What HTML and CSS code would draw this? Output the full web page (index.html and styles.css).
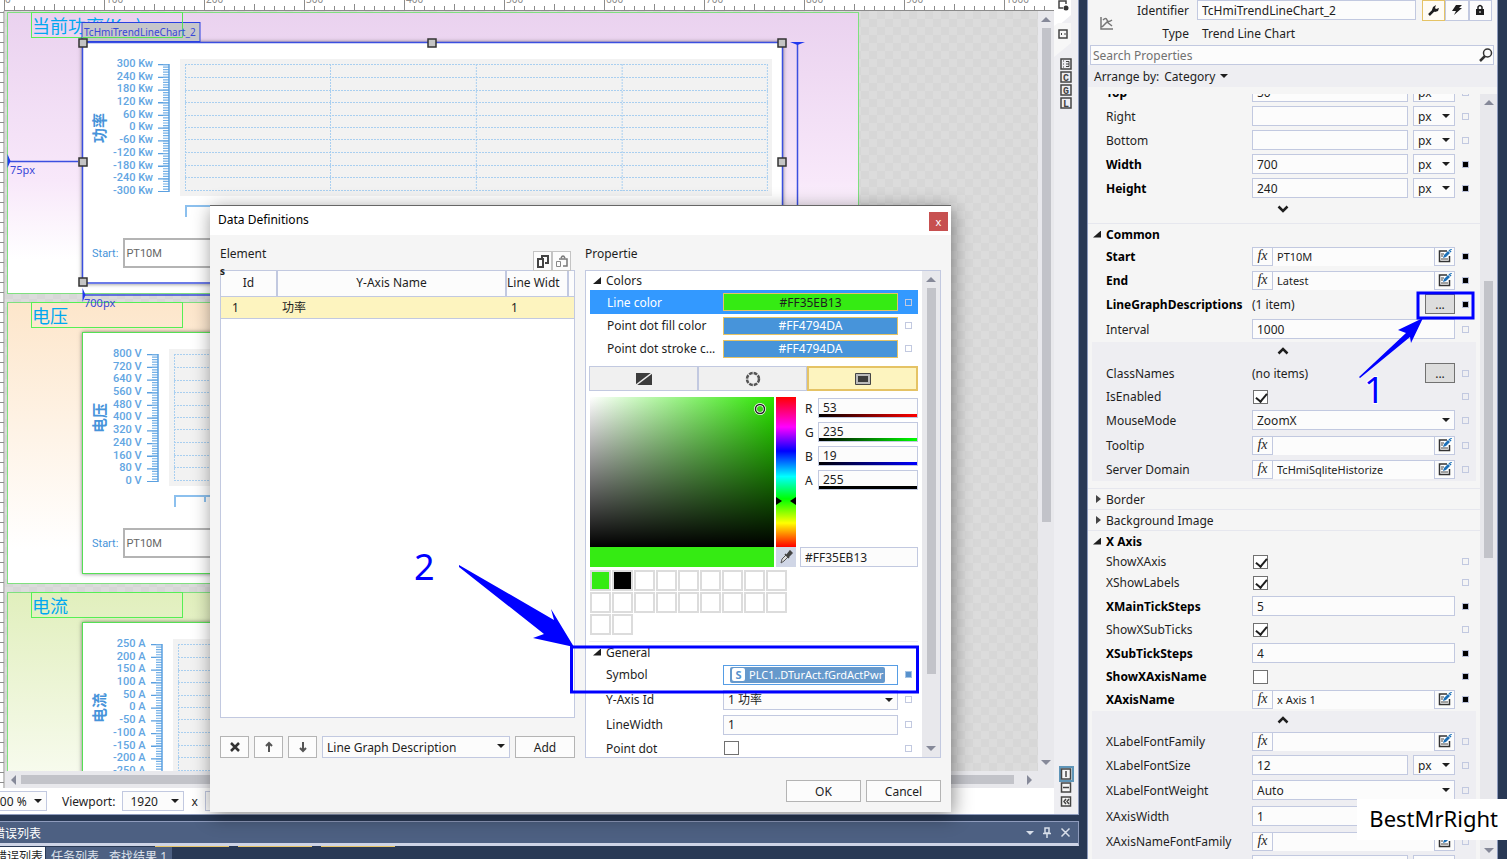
FILE: index.html
```html
<!DOCTYPE html>
<html lang="zh-CN">
<head>
    <meta charset="UTF-8">
    <meta name="viewport" content="width=device-width, initial-scale=1.0">
    <title>TcHmi Designer</title>
    <link rel="stylesheet" href="styles.css">
</head>
<body>
    <svg class="defs" width="0" height="0">
        <symbol id="edit" viewBox="0 0 14 14">
            <path d="M9 2H1.500V12.500H11.500V7" fill="#fff" stroke="#333" stroke-width="1.500"/>
            <path d="M3 5h3M3 7h2M3 10h7" stroke="#444"/>
            <path d="M5 9l1-3 4-4 2 2-4 4z" fill="#1c70b8"/>
            <path d="M11 1l2 2M13 0v1" stroke="#1c70b8" stroke-width="1.500"/>
        </symbol>
        <symbol id="up" viewBox="0 0 12 8"><path d="M1.500 6.500L6 2l4.500 4.500" fill="none" stroke="#1e1e1e" stroke-width="2.500"/></symbol>
        <symbol id="down" viewBox="0 0 12 8"><path d="M1.500 1.500L6 6l4.500-4.500" fill="none" stroke="#1e1e1e" stroke-width="2.500"/></symbol>
        <!-- Escala vertical: 10 divisiones -->
        <symbol id="scale" viewBox="0 0 12 137">
            <path d="M5.500 5V133" stroke="#5ba0e0" stroke-width="11" stroke-dasharray="1.300 11.400"/>
            <path d="M8 5V132" stroke="#74b0e6" stroke-width="6" stroke-dasharray="1.200 1.340"/>
            <path d="M11 5V133" stroke="#5ba0e0" stroke-width="1.500"/>
        </symbol>
        <symbol id="grid">
            <g stroke="#a9cff0" stroke-dasharray="2 1">
                <line x1="5" x2="100%" y1="5.500" y2="5.500"/>
                <line x1="5" x2="100%" y1="18.500" y2="18.500"/>
                <line x1="5" x2="100%" y1="31.500" y2="31.500"/>
                <line x1="5" x2="100%" y1="43.500" y2="43.500"/>
                <line x1="5" x2="100%" y1="56.500" y2="56.500"/>
                <line x1="5" x2="100%" y1="68.500" y2="68.500"/>
                <line x1="5" x2="100%" y1="80.500" y2="80.500"/>
                <line x1="5" x2="100%" y1="93.500" y2="93.500"/>
                <line x1="5" x2="100%" y1="106.500" y2="106.500"/>
                <line x1="5" x2="100%" y1="118.500" y2="118.500"/>
                <line x1="5" x2="100%" y1="131.500" y2="131.500"/>
                <line x1="5.500" x2="5.500" y1="5" y2="132"/>
                <line x1="25.600%" x2="25.600%" y1="5" y2="132"/>
                <line x1="50.400%" x2="50.400%" y1="5" y2="132"/>
                <line x1="75.200%" x2="75.200%" y1="5" y2="132"/>
                <line x1="99.900%" x2="99.900%" y1="5" y2="132"/>
            </g>
        </symbol>
    </svg>

    <main class="workspace">
        <div class="designer">
            <div class="canvas">
                <svg class="ruler-top" height="11">
                    <defs>
                        <pattern id="tick-h" x="4" width="10" height="11" patternUnits="userSpaceOnUse"><path d="M.500 6v5" stroke="#8c8c8c"/></pattern>
                        <pattern id="tick-h50" x="4" width="50" height="11" patternUnits="userSpaceOnUse"><path d="M.500 4v7" stroke="#8c8c8c"/></pattern>
                        <pattern id="tick-h100" x="4" width="100" height="11" patternUnits="userSpaceOnUse"><path d="M.500 0v11" stroke="#8c8c8c"/></pattern>
                        <pattern id="tick-v" y="1" width="5" height="10" patternUnits="userSpaceOnUse"><path d="M0 .500h4" stroke="#8c8c8c"/></pattern>
                    </defs>
                    <rect x="4" width="100%" height="11" fill="url(#tick-h)"/>
                    <rect x="4" width="100%" height="11" fill="url(#tick-h50)"/>
                    <rect x="4" width="100%" height="11" fill="url(#tick-h100)"/>
                    <path d="M4 10.500H1060" stroke="#8c8c8c"/>
                    <g class="ruler-text">
                        <text x="5" y="3">0</text><text x="106" y="3">100</text><text x="206" y="3">200</text>
                        <text x="306" y="3">300</text><text x="406" y="3">400</text><text x="506" y="3">500</text>
                        <text x="606" y="3">600</text><text x="706" y="3">700</text><text x="806" y="3">800</text>
                        <text x="906" y="3">900</text><text x="1006" y="3">1000</text>
                    </g>
                </svg>
                <svg class="ruler-left" width="5">
                    <rect width="5" height="100%" fill="url(#tick-v)"/>
                    <path d="M4 0V900" stroke="#8c8c8c"/>
                </svg>
                <div class="stage">
                    <section class="region region-power">
                        <h2>当前功率(Kw)</h2>
                        <div class="chart">
                            <div class="chart-main">
                                <b class="axis-name">功率</b>
                                <ul class="axis-labels">
                                    <li>300 Kw</li><li>240 Kw</li><li>180 Kw</li><li>120 Kw</li><li>60 Kw</li><li>0 Kw</li>
                                    <li>-60 Kw</li><li>-120 Kw</li><li>-180 Kw</li><li>-240 Kw</li><li>-300 Kw</li>
                                </ul>
                                <svg class="scale"><use href="#scale"/></svg>
                                <div class="plot">
                                    <svg class="grid"><use href="#grid"/></svg>
                                    <svg class="x-axis"><path d="M6 13V2H600" fill="none" stroke="#8cc0ee" stroke-width="2"/></svg>
                                </div>
                            </div>
                            <div class="chart-range"><label for="start1">Start:</label><input id="start1" value="PT10M"></div>
                        </div>
                    </section>
                    <section class="region region-voltage">
                        <h2>电压</h2>
                        <div class="chart chart-green">
                            <div class="chart-main">
                                <b class="axis-name">电压</b>
                                <ul class="axis-labels">
                                    <li>800 V</li><li>720 V</li><li>640 V</li><li>560 V</li><li>480 V</li><li>400 V</li>
                                    <li>320 V</li><li>240 V</li><li>160 V</li><li>80 V</li><li>0 V</li>
                                </ul>
                                <svg class="scale"><use href="#scale"/></svg>
                                <div class="plot">
                                    <svg class="grid"><use href="#grid"/></svg>
                                    <svg class="x-axis"><path d="M6 13V2H600M36 2v6" fill="none" stroke="#8cc0ee" stroke-width="2"/></svg>
                                </div>
                            </div>
                            <div class="chart-range"><label for="start2">Start:</label><input id="start2" value="PT10M"></div>
                        </div>
                    </section>
                    <section class="region region-current">
                        <h2>电流</h2>
                        <div class="chart chart-green">
                            <div class="chart-main">
                                <b class="axis-name">电流</b>
                                <ul class="axis-labels">
                                    <li>250 A</li><li>200 A</li><li>150 A</li><li>100 A</li><li>50 A</li><li>0 A</li>
                                    <li>-50 A</li><li>-100 A</li><li>-150 A</li><li>-200 A</li><li>-250 A</li>
                                </ul>
                                <svg class="scale"><use href="#scale"/></svg>
                                <div class="plot">
                                    <svg class="grid"><use href="#grid"/></svg>
                                </div>
                            </div>
                        </div>
                    </section>
                </div>
                <div class="vscroll stage-vscroll"><span class="thumb"></span></div>
                <div class="hscroll"><span class="thumb"></span></div>
                <svg class="selection">
                    <path d="M82.500 42.500H782.500V283H82.500zM8 161.500H78M83 295H600M797.500 43V300" fill="none" stroke="#3b4fe0" stroke-width="1.500"/>
                    <path d="M7.500 154v14l3-7zM82.500 288v14l3-7zM790 42h15l-7.500 3z" fill="#2038ee"/>
                    <rect x="82" y="22.500" width="118" height="19" fill="#c6c6ca" stroke="#2a40e0"/>
                    <path d="M82.500 37.500H182.500V13" fill="none" stroke="#55e055"/>
                    <g fill="#c4c4c4" stroke="#333" stroke-width="1.500">
                        <rect x="79" y="39" width="8" height="8"/><rect x="428" y="39" width="8" height="8"/><rect x="778" y="39" width="8" height="8"/>
                        <rect x="79" y="158" width="8" height="8"/><rect x="778" y="158" width="8" height="8"/><rect x="79" y="278" width="8" height="8"/>
                    </g>
                    <g class="selection-text">
                        <text class="selection-tag" x="84" y="36">TcHmiTrendLineChart_2</text>
                        <text x="10" y="174">75px</text>
                        <text x="84" y="307">700px</text>
                    </g>
                </svg>
            </div>
            <div class="zoom-bar">
                <span class="select zoom-select"><select aria-label="Zoom"><option>100 %</option></select></span>
                <label for="viewport">Viewport:</label>
                <span class="select viewport-select"><select id="viewport"><option>1920</option></select></span>
                <span>x</span>
                <span class="select viewport-select"><select aria-label="Height"><option>1080</option></select></span>
            </div>
            <div class="side-tabs">
                <svg width="24" height="115" viewBox="0 0 24 115">
                    <path d="M0 0H17V15L3 27Q0 30 0 32z" fill="#fff"/>
                    <path d="M0 26L4 23H17V43L0 57z" fill="#f7f7f7"/>
                    <g fill="none" stroke="#444" stroke-width="1.500">
                        <path d="M12 4V1H5v7h4"/><rect x="5" y="30" width="8" height="8"/><path d="M7 34l1-1M7 34l1 1M11 33v2" stroke-width="1"/>
                        <rect x="7" y="59" width="10" height="10"/><rect x="7" y="72" width="10" height="10"/><rect x="7" y="85" width="10" height="10"/><rect x="7" y="98" width="10" height="10"/>
                        <path d="M9 61h1M9 64h1M9 67h1M12 61.500h3v5h-3M12 64h3" stroke-width="1"/>
                    </g>
                    <circle cx="12" cy="8" r="2.500" fill="#333"/>
                    <g class="tab-letter"><text x="12" y="81">C</text><text x="12" y="94">G</text><text x="12" y="107">L</text></g>
                </svg>
                <svg width="24" height="48" viewBox="0 0 24 48">
                    <rect x="6" y="1" width="13" height="14" fill="#cfe0ea" stroke="#5f95b8" stroke-width="2"/>
                    <g fill="#f5f5f5" stroke="#444" stroke-width="1.500">
                        <rect x="7.500" y="3" width="9" height="10"/><path d="M12 5v6"/>
                        <rect x="7.500" y="17" width="9" height="9"/><path d="M9 21.500h6"/>
                        <rect x="7.500" y="31" width="9" height="9"/><path d="M12 33l-2 2.500 2 2.500M15 33l-2 2.500 2 2.500" fill="none"/>
                    </g>
                </svg>
            </div>
        </div>
        <div class="errors">
            <div class="errors-title">
                <span>错误列表</span>
                <svg width="46" height="12" viewBox="0 0 46 12">
                    <path d="M1 4h8L5 8z" fill="#d8dee9"/>
                    <path d="M20 1h4v5h-4zM18 6.500h8M22 7v4M36.500 1.500l8 8M44.500 1.500l-8 8" fill="none" stroke="#d8dee9" stroke-width="1.500"/>
                </svg>
            </div>
            <div class="marks"><i></i><i></i><i></i></div>
            <div class="errors-tabs">
                <a class="active" href="#">错误列表</a><a href="#">任务列表</a><a href="#">查找结果 1</a>
            </div>
        </div>
    </main>

    <aside class="properties">
        <header>
            <svg class="type-icon" width="14" height="14" viewBox="0 0 14 14"><path d="M1 1v12h12M3 4q3-3 4 0t5 0M2 11l5-5 5 4" fill="none" stroke="#777" stroke-width="1.500"/></svg>
            <label for="identifier">Identifier</label>
            <input id="identifier" value="TcHmiTrendLineChart_2">
            <div class="modes">
                <button class="on" aria-label="Properties"><svg width="12" height="12" viewBox="0 0 12 12"><path d="M1 11l5-5" stroke="#1e1e1e" stroke-width="2.500"/><path d="M5 3l3-2-1 3 1 1 3-1-1 3-3 1-3-2z" fill="#1e1e1e"/></svg></button>
                <button aria-label="Events"><svg width="12" height="12" viewBox="0 0 12 12"><path d="M5 1h6L8 4h3L3 11l2-4H1z" fill="#1e1e1e"/></svg></button>
                <button aria-label="Lock"><svg width="12" height="12" viewBox="0 0 12 12"><path d="M4 6V3q2-3 4 0v3" fill="none" stroke="#1e1e1e" stroke-width="1.500"/><path d="M2 5h8v6H2z" fill="#1e1e1e"/><path d="M6 7v2" stroke="#fff"/></svg></button>
            </div>
            <span class="type-label">Type</span>
            <span class="type-value">Trend Line Chart</span>
        </header>
        <div class="search">
            <input type="search" placeholder="Search Properties" aria-label="Search Properties">
            <svg width="14" height="14" viewBox="0 0 14 14"><circle cx="8.500" cy="5" r="4" fill="none" stroke="#333" stroke-width="1.500"/><path d="M1 13l5-5" stroke="#333" stroke-width="2.500"/></svg>
        </div>
        <div class="arrange">Arrange by: <button>Category</button></div>
        <div class="scroll-area">
            <div class="props">
                <div class="row first"><label class="set" for="p-top">Top</label><input id="p-top" value="50"><span class="select unit"><select aria-label="Unit"><option>px</option></select></span><i class="dot"></i></div>
                <div class="row"><label for="p-right">Right</label><input id="p-right"><span class="select unit"><select aria-label="Unit"><option>px</option></select></span><i class="dot"></i></div>
                <div class="row"><label for="p-bottom">Bottom</label><input id="p-bottom"><span class="select unit"><select aria-label="Unit"><option>px</option></select></span><i class="dot"></i></div>
                <div class="row"><label class="set" for="p-width">Width</label><input id="p-width" value="700"><span class="select unit"><select aria-label="Unit"><option>px</option></select></span><i class="dot full"></i></div>
                <div class="row"><label class="set" for="p-height">Height</label><input id="p-height" value="240"><span class="select unit"><select aria-label="Unit"><option>px</option></select></span><i class="dot full"></i></div>
                <div class="more more-last"><svg><use href="#down"/></svg></div>

                <h3 class="open">Common</h3>
                <div class="row"><label class="set" for="p-start">Start</label><span class="fx"><i>fx</i><input id="p-start" value="PT10M"><button aria-label="Edit"><svg><use href="#edit"/></svg></button></span><i class="dot full"></i></div>
                <div class="row"><label class="set" for="p-end">End</label><span class="fx"><i>fx</i><input id="p-end" value="Latest"><button aria-label="Edit"><svg><use href="#edit"/></svg></button></span><i class="dot full"></i></div>
                <div class="row"><label class="set" for="p-lines">LineGraphDescriptions</label><span class="items">(1 item)</span><button class="browse" id="p-lines">...</button><i class="dot full"></i></div>
                <div class="row tall"><label for="p-interval">Interval</label><input id="p-interval" value="1000"><i class="dot"></i></div>
                <div class="advanced">
                    <div class="more"><svg><use href="#up"/></svg></div>
                    <div class="row tall"><label for="p-class">ClassNames</label><span class="items">(no items)</span><button class="browse" id="p-class">...</button><i class="dot"></i></div>
                    <div class="row check"><label for="p-enabled">IsEnabled</label><input type="checkbox" id="p-enabled" checked><i class="dot"></i></div>
                    <div class="row tall"><label for="p-mouse">MouseMode</label><span class="select"><select id="p-mouse"><option>ZoomX</option></select></span><i class="dot"></i></div>
                    <div class="row"><label for="p-tip">Tooltip</label><span class="fx"><i>fx</i><input id="p-tip"><button aria-label="Edit"><svg><use href="#edit"/></svg></button></span><i class="dot"></i></div>
                    <div class="row"><label for="p-server">Server Domain</label><span class="fx"><i>fx</i><input id="p-server" value="TcHmiSqliteHistorize"><button aria-label="Edit"><svg><use href="#edit"/></svg></button></span><i class="dot"></i></div>
                </div>

                <h3 class="closed">Border</h3>
                <h3 class="closed">Background Image</h3>
                <h3 class="open">X Axis</h3>
                <div class="row check"><label for="x-show">ShowXAxis</label><input type="checkbox" id="x-show" checked><i class="dot"></i></div>
                <div class="row check"><label for="x-labels">XShowLabels</label><input type="checkbox" id="x-labels" checked><i class="dot"></i></div>
                <div class="row tall"><label class="set" for="x-main">XMainTickSteps</label><input id="x-main" value="5"><i class="dot full"></i></div>
                <div class="row check"><label for="x-subshow">ShowXSubTicks</label><input type="checkbox" id="x-subshow" checked><i class="dot"></i></div>
                <div class="row tall"><label class="set" for="x-sub">XSubTickSteps</label><input id="x-sub" value="4"><i class="dot full"></i></div>
                <div class="row check"><label class="set" for="x-nameshow">ShowXAxisName</label><input type="checkbox" id="x-nameshow"><i class="dot full"></i></div>
                <div class="row"><label class="set" for="x-name">XAxisName</label><span class="fx"><i>fx</i><input id="x-name" value="x Axis 1"><button aria-label="Edit"><svg><use href="#edit"/></svg></button></span><i class="dot full"></i></div>
                <div class="advanced">
                    <div class="more"><svg><use href="#up"/></svg></div>
                    <div class="row"><label for="x-font">XLabelFontFamily</label><span class="fx"><i>fx</i><input id="x-font"><button aria-label="Edit"><svg><use href="#edit"/></svg></button></span><i class="dot"></i></div>
                    <div class="row"><label for="x-size">XLabelFontSize</label><input id="x-size" value="12"><span class="select unit"><select aria-label="Unit"><option>px</option></select></span><i class="dot"></i></div>
                    <div class="row tall"><label for="x-weight">XLabelFontWeight</label><span class="select"><select id="x-weight"><option>Auto</option></select></span><i class="dot"></i></div>
                    <div class="row tall"><label for="x-width">XAxisWidth</label><input id="x-width" value="1"><i class="dot"></i></div>
                    <div class="row"><label for="x-namefont">XAxisNameFontFamily</label><span class="fx"><i>fx</i><input id="x-namefont"><button aria-label="Edit"><svg><use href="#edit"/></svg></button></span><i class="dot"></i></div>
                    <div class="row"><label></label><input aria-label="XAxisNameFontSize"><span class="select unit"><select aria-label="Unit"><option></option></select></span><i class="dot"></i></div>
                </div>
            </div>
            <div class="vscroll props-vscroll"><span class="thumb"></span></div>
        </div>
    </aside>

    <div class="dialog" role="dialog" aria-labelledby="dialog-title">
        <div class="dialog-title"><span id="dialog-title">Data Definitions</span><button aria-label="Close">x</button></div>
        <div class="dialog-body">
            <div class="elements">
                <div class="caption"><span>Element<br><b>s</b></span>
                    <div class="copy">
                        <button aria-label="Copy"><svg width="14" height="14" viewBox="0 0 14 14"><path d="M2 5h5v8H2zM6 4V2h6v7H9" fill="none" stroke="#444" stroke-width="2"/></svg></button>
                        <button aria-label="Paste"><svg width="14" height="14" viewBox="0 0 14 14"><path d="M1.500 7.500h4v5h-4z" fill="none" stroke="#888"/><path d="M4 5h8v7H8M6 4q2-4 4 0" fill="none" stroke="#777" stroke-width="1.500"/></svg></button>
                    </div>
                </div>
                <div class="table-box">
                    <table>
                        <colgroup><col class="c-id"><col><col class="c-width"><col class="c-end"></colgroup>
                        <thead><tr><th>Id</th><th>Y-Axis Name</th><th>Line Widt</th><th></th></tr></thead>
                        <tbody><tr><td>1</td><td>功率</td><td>1</td><td></td></tr></tbody>
                    </table>
                </div>
                <div class="actions">
                    <button aria-label="Delete"><svg width="12" height="12" viewBox="0 0 12 12"><path d="M2 2l8 8M10 2l-8 8" stroke="#333" stroke-width="2.500"/></svg></button>
                    <button aria-label="Up"><svg width="12" height="12" viewBox="0 0 12 12"><path d="M6 11V2M3 5l3-3 3 3" fill="none" stroke="#555" stroke-width="2"/></svg></button>
                    <button aria-label="Down"><svg width="12" height="12" viewBox="0 0 12 12"><path d="M6 1v9M3 7l3 3 3-3" fill="none" stroke="#555" stroke-width="2"/></svg></button>
                    <span class="select"><select aria-label="Type"><option>Line Graph Description</option></select></span>
                    <button class="add">Add</button>
                </div>
            </div>
            <div class="details">
                <div class="caption">Propertie</div>
                <div class="details-box">
                    <div class="details-list">
                        <h4>Colors</h4>
                        <div class="color-row active"><span>Line color</span><button class="green">#FF35EB13</button><i class="dot"></i></div>
                        <div class="color-row"><span>Point dot fill color</span><button>#FF4794DA</button><i class="dot"></i></div>
                        <div class="color-row"><span>Point dot stroke c...</span><button>#FF4794DA</button><i class="dot"></i></div>
                        <div class="brushes">
                            <button aria-label="None"><svg width="18" height="12" viewBox="0 0 18 12"><path d="M1 0h16v12H1z" fill="#3c3c3c"/><path d="M1 12L17 0" stroke="#eee" stroke-width="1.500"/></svg></button>
                            <button aria-label="Gradient"><svg width="16" height="16" viewBox="0 0 16 16"><circle cx="8" cy="8" r="6" fill="none" stroke="#555" stroke-width="2.500" stroke-dasharray="3.700 1"/></svg></button>
                            <button class="on" aria-label="Solid"><svg width="18" height="12" viewBox="0 0 18 12"><path d="M1.500 .500h15v11h-15z" fill="#bbb" stroke="#444"/><path d="M4 3h10v6H4z" fill="#3c3c3c"/></svg></button>
                        </div>
                        <div class="picker">
                            <svg class="shade" viewBox="0 0 184 150"><defs><linearGradient id="sat"><stop stop-color="#fff"/><stop offset="1" stop-color="#2be600"/></linearGradient><linearGradient id="val" x2="0" y2="1"><stop stop-opacity="0"/><stop offset="1"/></linearGradient></defs><rect width="184" height="150" fill="url(#sat)"/><rect width="184" height="150" fill="url(#val)"/><circle cx="170" cy="12" r="4.500" fill="none" stroke="#fff" stroke-width="3"/><circle cx="170" cy="12" r="4.500" fill="none" stroke="#222" stroke-width="1.500"/></svg>
                            <div class="hue"></div>
                            <div class="channels">
                                <label for="r">R</label><input id="r" class="r" value="53">
                                <label for="g">G</label><input id="g" class="g" value="235">
                                <label for="b">B</label><input id="b" class="b" value="19">
                                <label for="a">A</label><input id="a" class="a" value="255">
                            </div>
                            <div class="preview"></div>
                            <button class="dropper" aria-label="Pick color"><svg width="14" height="14" viewBox="0 0 14 14"><path d="M2 13l1-4 4-4 2 2-4 4z" fill="#ddd" stroke="#555"/><path d="M6 4l4 4M8 5l3-4 2 2-3 3z" fill="#444" stroke="#444" stroke-width="1.500"/></svg></button>
                            <input class="hex" value="#FF35EB13" aria-label="Hex">
                        </div>
                        <div class="swatches">
                            <i class="lime"></i><i class="black"></i><i></i><i></i><i></i><i></i><i></i><i></i><i></i>
                            <i></i><i></i><i></i><i></i><i></i><i></i><i></i><i></i><i></i>
                            <i></i><i></i>
                        </div>
                        <h4 class="general">General</h4>
                        <div class="field-row"><span>Symbol</span><div class="symbol"><span><b>S</b>PLC1..DTurAct.fGrdActPwr</span></div><i class="dot blue"></i></div>
                        <div class="field-row"><label for="d-axis">Y-Axis Id</label><span class="select"><select id="d-axis"><option>1 功率</option></select></span><i class="dot"></i></div>
                        <div class="field-row"><label for="d-width">LineWidth</label><input id="d-width" value="1"><i class="dot"></i></div>
                        <div class="field-row last"><label for="d-dot">Point dot</label><input type="checkbox" id="d-dot"><i class="dot"></i></div>
                    </div>
                    <div class="vscroll details-vscroll"><span class="thumb"></span></div>
                </div>
            </div>
        </div>
        <div class="dialog-footer"><button>OK</button><button>Cancel</button></div>
    </div>

    <!-- Anotaciones -->
    <svg class="notes">
        <g fill="none" stroke="#0000ff" stroke-width="3">
            <rect x="571.500" y="647" width="346" height="45"/>
            <rect x="1418" y="293" width="55" height="25"/>
        </g>
        <g fill="#0000ff">
            <path d="M459 565L554 620 551 609 574 647 533 638 544 634 459 567z"/>
            <path d="M1359 377L1406 333 1398 330 1423 318 1411 343 1410 337 1360 378z"/>
        </g>
        <g class="note-text"><text x="414" y="580">2</text><text x="1364" y="403">1</text></g>
    </svg>
    <div class="author">BestMrRight</div>
</body>
</html>
```
FILE: styles.css
```css
* {
    box-sizing: border-box;
}
body {
    display: flex;
    margin: 0;
    height: 100vh;
    overflow: hidden;
    position: relative;
    background-color: #293955;
    color: #1e1e1e;
    font-family: "Noto Sans", "Noto Sans CJK SC", sans-serif;
    font-size: 12px;
}
input, select, button {
    font: inherit;
    color: inherit;
    margin: 0;
    padding: 0;
    border: 1px solid #c2c9e0;
    border-radius: 0;
    background-color: #fcfcfc;
    min-width: 0;
}
input {
    height: 20px;
    padding: 0 4px;
    flex: 1;
}
button {
    display: flex;
    align-items: center;
    justify-content: center;
}
h2, h3, h4, ul {
    margin: 0;
    padding: 0;
    font-size: 12px;
    font-weight: normal;
    list-style: none;
}
i {
    font-style: normal;
}
svg {
    display: block;
}
.defs {
    position: absolute;
}
input[type="checkbox"] {
    appearance: none;
    position: relative;
    flex: 0 0 15px;
    height: 14px;
    padding: 0;
    border: 1px solid #717171;
    background-color: #fff;
}
input[type="checkbox"]:checked::after {
    content: "";
    position: absolute;
    left: 4px;
    top: 0;
    width: 5px;
    height: 9px;
    border: solid #1e1e1e;
    border-width: 0 2px 2px 0;
    transform: rotate(40deg);
}
.select {
    position: relative;
    display: flex;
    flex: 1;
}
.select select {
    appearance: none;
    width: 100%;
    height: 20px;
    padding-left: 4px;
}
.select::after {
    content: "";
    position: absolute;
    right: 5px;
    top: 8px;
    border: 4px solid transparent;
    border-top-color: #1e1e1e;
    border-bottom: 0;
}
.dot {
    flex: 0 0 7px;
    height: 7px;
    border: 1px solid #c2c9e0;
}
.dot.full {
    border-color: #b9c0d8;
    background-color: #000;
}
.dot.blue {
    border-color: #a5c4e6;
    background-color: #5791cc;
}
.vscroll {
    position: relative;
    display: flex;
    justify-content: center;
    background-color: #e8e8ec;
}
.vscroll::before, .vscroll::after {
    content: "";
    position: absolute;
    top: 6px;
    border: 5px solid transparent;
    border-bottom-color: #868999;
    border-top: 0;
}
.vscroll::after {
    top: auto;
    bottom: 6px;
    border-top: 5px solid #868999;
    border-bottom: 0;
}
.thumb {
    background-color: #c2c3c9;
}
.vscroll .thumb {
    width: 9px;
}

/* Diseñador */
.workspace {
    display: flex;
    flex-direction: column;
    flex: 1;
    min-width: 0;
    margin-right: 8px;
}
.designer {
    display: grid;
    grid-template-columns: 1fr 24px;
    grid-template-rows: 1fr 26px;
    flex: 1;
    min-height: 0;
    background-color: #fff;
    border-right: 1px solid #8e9bbc;
    border-bottom: 1px solid #8e9bbc;
}
.canvas {
    position: relative;
    display: grid;
    grid-template-columns: 5px 1fr 16px;
    grid-template-rows: 11px 1fr 17px;
    min-height: 0;
    overflow: hidden;
}
.ruler-top {
    grid-column: 1 / 4;
    width: 100%;
}
.ruler-left {
    grid-row: 2 / 4;
    height: 100%;
}
.ruler-text {
    font-size: 10px;
    fill: #8c8c8c;
}
.stage {
    display: flex;
    flex-direction: column;
    gap: 8px;
    padding: 1px 0 0 2px;
    min-width: 0;
    min-height: 0;
    overflow: hidden;
    background: repeating-conic-gradient(#d7d7d7 0 25%, #dcdcdc 0 50%) 0 0 / 16px 16px;
}
.stage-vscroll .thumb {
    margin: 17px 0 249px;
}
.hscroll {
    grid-column: 2 / 4;
    position: relative;
    display: flex;
    align-items: center;
    padding: 0 40px 0 16px;
    background-color: #e8e8ec;
}
.hscroll .thumb {
    flex: 1;
    height: 9px;
}
.hscroll::before, .hscroll::after {
    content: "";
    position: absolute;
    left: 6px;
    border: 5px solid transparent;
    border-right-color: #868999;
    border-left: 0;
}
.hscroll::after {
    left: auto;
    right: 22px;
    border-left: 5px solid #868999;
    border-right: 0;
}
.region {
    flex: none;
    width: 852px;
    height: 282px;
    border: 1px solid #7fe07f;
    background-image: linear-gradient(#ead2ef, #f8e8fa 60%, #fff 88%);
}
.region-voltage {
    background-image: linear-gradient(#fde6cb, #fff 88%);
}
.region-current {
    background-image: linear-gradient(#e1efbd, #fff 88%);
}
.region h2 {
    width: 152px;
    height: 26px;
    margin: -1px 0 0 23px;
    border: 1px solid #55f055;
    color: #00a8f0;
    font-family: "Noto Sans CJK SC", sans-serif;
    font-size: 18px;
    line-height: 24px;
}
.chart {
    width: 701px;
    height: 242px;
    margin: 4px 0 0 74px;
    padding: 17px 11px 0 5px;
    background-color: #fff;
    box-shadow: 0 0 4px rgba(0, 0, 0, 0.5);
    font-family: Roboto, "Noto Sans CJK SC", sans-serif;
    font-size: 11px;
}
.chart-green {
    border: 1px solid #55e055;
    padding: 16px 10px 0 4px;
}
.chart-main {
    display: flex;
    height: 179px;
}
.axis-name {
    width: 26px;
    height: 137px;
    color: #4794da;
    font-size: 15px;
    line-height: 26px;
    text-align: center;
    writing-mode: vertical-rl;
    transform: rotate(180deg);
    text-orientation: sideways;
}
.axis-labels {
    display: flex;
    flex-direction: column;
    justify-content: space-between;
    height: 139px;
    margin: -1px 5px 0 0;
    color: #62a5e2;
    font-size: 11px;
    line-height: 12px;
    font-weight: 500;
    text-align: right;
}
.scale {
    width: 12px;
    height: 137px;
    margin-right: 10px;
}
.plot {
    flex: 1;
    background: linear-gradient(#f2f2f2, #f2f2f2) 0 0 / 100% 137px no-repeat;
}
.grid {
    width: 100%;
    height: 137px;
    padding-right: 4px;
}
.x-axis {
    width: 100%;
    height: 14px;
    margin-top: 8px;
}
.chart-range {
    display: flex;
    align-items: center;
    gap: 5px;
    padding-left: 5px;
    color: #4794da;
}
.chart-range input {
    height: 30px;
    padding: 0 1px;
    border: 2px solid #b4b4b4;
    background-color: #fff;
    color: #666;
}
.selection {
    position: absolute;
    left: 0;
    top: 0;
    width: 100%;
    height: 100%;
    pointer-events: none;
}
.selection-text {
    fill: #3848d8;
    font-size: 11px;
}
.selection-tag {
    font-size: 10px;
}
.side-tabs {
    grid-column: 2;
    grid-row: 1 / 3;
    display: flex;
    flex-direction: column;
    justify-content: space-between;
    background-color: #eeeef2;
}
.zoom-bar {
    display: flex;
    align-items: center;
    gap: 7px;
    min-width: 0;
    margin-left: -12px;
}
.zoom-bar label {
    margin-left: 8px;
}
.zoom-bar .select {
    flex: 0 0 62px;
}
.zoom-bar .select.zoom-select {
    flex-basis: 59px;
}
.zoom-bar .viewport-select select {
    padding-left: 7px;
}

/* Lista de errores */
.errors {
    height: 44px;
    padding-top: 6px;
    overflow: hidden;
}
.errors-title {
    display: flex;
    align-items: center;
    justify-content: space-between;
    height: 25px;
    margin-left: -8px;
    padding-right: 7px;
    border: 1px solid #8e9bbc;
    border-bottom: 3px solid #ced4e6;
    background-color: #4d6082;
    color: #fff;
}
.errors-tabs {
    display: flex;
    height: 20px;
    margin-left: -8px;
}
.errors-tabs a {
    padding: 1px 5px;
    background-color: #4d6082;
    color: #dce1ea;
    line-height: 18px;
    text-decoration: none;
}
.errors-tabs a.active {
    padding: 1px 2px 1px 3px;
    margin-right: 1px;
    background-color: #fff;
    color: #1e1e1e;
}
.marks {
    display: flex;
    gap: 9px;
    height: 1px;
    padding-left: 155px;
}
.marks i {
    width: 74px;
    background-color: #e5c365;
}

/* Panel de propiedades */
.properties {
    display: flex;
    flex-direction: column;
    width: 411px;
    margin-right: 9px;
    border: solid #8e9bbc;
    border-width: 0 1px;
    background-color: #f5f5f5;
}
.properties header {
    display: grid;
    grid-template-columns: 14px 73px 219px 71px;
    grid-template-rows: 20px 26px;
    gap: 0 5px;
    height: 45px;
    padding-left: 12px;
    align-items: center;
}
.properties header label, .type-label {
    text-align: right;
    padding-right: 3px;
}
.type-icon {
    grid-row: 1 / 3;
}
.type-label {
    grid-column: 2;
}
.type-value {
    padding-left: 5px;
}
.modes {
    display: flex;
    padding-left: 1px;
}
.modes button {
    flex: 1;
    height: 21px;
}
.modes .on {
    border-color: #e5c365;
    background-color: #fffcf4;
}
.search {
    display: flex;
    align-items: center;
    height: 20px;
    margin: 0 3px 0 2px;
    border: 1px solid #c2c9e0;
    background-color: #fcfcfc;
}
.search input {
    height: 18px;
    padding: 0 2px;
    border: 0;
}
.search input::placeholder {
    color: #717171;
}
.arrange {
    display: flex;
    align-items: center;
    gap: 5px;
    height: 22px;
    margin-bottom: 7px;
    padding-left: 6px;
    background-color: #eeeef2;
}
.arrange button {
    border: 0;
    background: none;
    gap: 5px;
}
.arrange button::after {
    content: "";
    border: 4px solid transparent;
    border-top-color: #1e1e1e;
    border-bottom: 0;
}
.scroll-area {
    display: flex;
    flex: 1;
    min-height: 0;
}
.props {
    flex: 1;
    overflow: hidden;
}
.row {
    display: flex;
    align-items: center;
    height: 24px;
    padding: 0 11px 0 18px;
}
.row.first {
    margin-top: -14px;
}
.row.tall {
    height: 26px;
}
.row.check {
    height: 21px;
}
.row label {
    flex: 0 0 146px;
    white-space: nowrap;
}
.row .dot {
    margin-left: 7px;
}
.row input[type="checkbox"] {
    margin: 0 auto 0 1px;
}
.row .unit {
    flex: 0 0 42px;
    margin-left: 5px;
}
.set {
    color: #000;
    font-weight: bold;
}
.items {
    flex: 1;
}
.browse {
    width: 30px;
    height: 20px;
    border-color: #717171;
    background-color: #dddddd;
}
.fx {
    display: flex;
    flex: 1;
    min-width: 0;
    height: 19px;
    border: 1px solid #c2c9e0;
    background-color: #fcfcfc;
}
.fx i {
    flex: 0 0 20px;
    border-right: 1px solid #c2c9e0;
    font-family: "Liberation Serif", serif;
    font-size: 14px;
    font-style: italic;
    line-height: 16px;
    text-align: center;
}
.fx input {
    height: 18px;
    border: 0;
    font-size: 11px;
}
.fx button {
    flex: 0 0 20px;
    border-width: 0 0 0 1px;
}
.fx svg {
    width: 14px;
    height: 14px;
}
.more {
    display: flex;
    align-items: center;
    height: 18px;
    padding-left: 189px;
}
.more svg {
    width: 12px;
    height: 8px;
}
.more-last {
    height: 17px;
    margin-bottom: 6px;
}
.props h3 {
    display: flex;
    align-items: center;
    gap: 5px;
    height: 21px;
    padding-left: 5px;
    border-top: 1px solid #e6e7ee;
}
.props h3.open {
    color: #000;
    font-weight: bold;
}
.open::before, .details h4::before {
    content: "";
    width: 8px;
    height: 7px;
    background-color: #1e1e1e;
    clip-path: polygon(100% 0, 100% 100%, 0 100%);
}
.closed::before {
    content: "";
    width: 5px;
    height: 8px;
    margin-left: 3px;
    background-color: #444;
    clip-path: polygon(0 0, 100% 50%, 0 100%);
}
.advanced {
    margin: 0 4px 7px;
    background-color: #eeeef2;
}
.advanced .row {
    padding: 0 7px 0 14px;
}
.advanced .more {
    padding-left: 185px;
}
.props-vscroll {
    width: 17px;
}
.props-vscroll .thumb {
    height: 277px;
    margin-top: 187px;
}

/* Ventana */
.dialog {
    position: absolute;
    left: 210px;
    top: 205px;
    display: flex;
    flex-direction: column;
    width: 741px;
    height: 607px;
    border-top: 1px solid #666;
    background-color: #f5f5f5;
    box-shadow: 2px 4px 18px rgba(0, 0, 0, 0.45);
}
.dialog-title {
    display: flex;
    align-items: center;
    justify-content: space-between;
    height: 29px;
    padding: 0 3px 2px 8px;
    background-color: #fff;
    color: #000;
}
.dialog-title button {
    width: 19px;
    height: 19px;
    margin-top: 4px;
    border: 0;
    background-color: #c75050;
    color: #fff;
    font-size: 11px;
}
.dialog-body {
    display: flex;
    flex: 1;
    gap: 10px;
    padding: 0 10px;
    min-height: 0;
}
.elements {
    display: flex;
    flex-direction: column;
    flex: 0 0 355px;
}
.details {
    display: flex;
    flex-direction: column;
    flex: 1;
    min-width: 0;
}
.caption {
    position: relative;
    display: flex;
    justify-content: space-between;
    height: 35px;
    padding-top: 10px;
    line-height: 17px;
}
.caption b {
    font-size: 10px;
}
.copy {
    display: flex;
    padding: 6px 4px 0 0;
}
.copy button {
    width: 19px;
    height: 20px;
    border-color: #c4c4c4;
}
.table-box {
    flex: 1;
    border: 1px solid #c2c9e0;
    background-color: #fff;
}
table {
    width: 100%;
    table-layout: fixed;
    border-collapse: collapse;
}
th {
    height: 25px;
    padding: 0 0 2px;
    border: solid #c2c9e0;
    border-width: 0 2px 1px 0;
    background-color: #fcfcfc;
    font-weight: normal;
    white-space: nowrap;
}
th:nth-child(3) {
    text-align: left;
}
th:last-child {
    border-right: 0;
}
td {
    height: 22px;
    padding: 0 5px;
    border-bottom: 1px solid #c2c9e0;
    background-color: #fdf4bf;
}
td:first-child {
    padding-left: 11px;
}
.c-id {
    width: 56px;
}
.c-width {
    width: 62px;
}
.c-end {
    width: 6px;
}
.actions {
    display: flex;
    gap: 5px;
    height: 40px;
    padding-top: 18px;
}
.actions button {
    width: 29px;
    height: 22px;
    border-color: #b4b4b4;
}
.actions .add {
    width: 60px;
}
.actions select {
    height: 22px;
}
.details-box {
    display: flex;
    flex: 1;
    min-height: 0;
    border: 1px solid #c2c9e0;
    background-color: #fff;
}
.details-list {
    flex: 1;
    padding: 0 4px 0 3px;
    overflow: hidden;
}
.details-vscroll {
    width: 18px;
}
.details-vscroll .thumb {
    height: 386px;
    margin-top: 17px;
}
.details h4 {
    display: flex;
    align-items: center;
    gap: 5px;
    height: 19px;
    padding-left: 4px;
}
.color-row {
    display: flex;
    align-items: center;
    height: 23px;
    margin-left: 1px;
    padding: 0 6px 0 17px;
}
.color-row.active {
    height: 24px;
    background-color: #3399ff;
    color: #fff;
}
.color-row span {
    flex: 1;
    white-space: nowrap;
}
.color-row button {
    width: 175px;
    height: 18px;
    border-color: #e5c365;
    background-color: #4794da;
    color: #fff;
}
.color-row .green {
    background-color: #35eb13;
    color: #1e1e1e;
}
.color-row .dot, .field-row .dot {
    margin-left: 7px;
}
.brushes {
    display: flex;
    height: 25px;
    margin-top: 6px;
}
.brushes button {
    flex: 1;
    background-color: #f0f0f0;
}
.brushes .on {
    border: 2px solid #e5c365;
    background-color: #fdf4bf;
}
.picker {
    display: grid;
    grid-template-columns: 184px 20px 120px;
    grid-template-rows: 150px 20px;
    column-gap: 2px;
    margin: 6px 0 0 1px;
}
.shade {
    width: 184px;
    height: 150px;
}
.hue {
    position: relative;
    background-image: linear-gradient(#f00, #f0f 20%, #00f 36%, #0ff 53%, #0f0 68%, #ff0 84%, #f00);
}
.hue::before, .hue::after {
    content: "";
    position: absolute;
    top: 100px;
    left: 0;
    border: 4px solid transparent;
    border-left: 6px solid #000;
    border-right: 0;
}
.hue::after {
    left: auto;
    right: 0;
    border-right: 6px solid #000;
    border-left: 0;
}
.channels {
    display: grid;
    grid-template-columns: 12px 1fr;
    grid-auto-rows: 20px;
    align-content: start;
    gap: 4px 1px;
    padding: 1px 0 0 7px;
    line-height: 22px;
}
.channels input {
    background: linear-gradient(to right, #000, #f00) 0 100% / 100% 3px no-repeat #fcfcfc;
}
.channels .g {
    background-image: linear-gradient(to right, #000, #0f0);
}
.channels .b {
    background-image: linear-gradient(to right, #000, #00f);
}
.channels .a {
    background-image: linear-gradient(#000, #000);
}
.preview {
    background-color: #35eb13;
}
.dropper {
    border: 0;
    background-color: #d0d6e6;
}
.hex {
    margin-left: 2px;
}
.swatches {
    display: grid;
    grid-template-columns: repeat(9, 21px);
    grid-auto-rows: 21px;
    gap: 1px;
    margin: 3px 0 6px 1px;
}
.swatches i {
    border: 2px solid #dcdcdc;
}
.swatches .lime {
    background-color: #35eb13;
}
.swatches .black {
    background-color: #000;
}
.details .general {
    height: 21px;
    border-top: 1px solid #ececf0;
}
.field-row {
    display: flex;
    align-items: center;
    height: 25px;
    padding: 0 6px 0 17px;
}
.field-row > :first-child {
    flex: 1;
}
.field-row > .symbol, .field-row > .select, .field-row > input:not([type="checkbox"]) {
    flex: 0 0 175px;
}
.field-row.last {
    height: 22px;
}
.field-row input[type="checkbox"] {
    margin: 0 159px 0 1px;
}
.symbol {
    display: flex;
    height: 20px;
    padding: 1px 6px;
    border: 1px solid #569de5;
    background-color: #fff;
}
.symbol span {
    display: flex;
    align-items: center;
    gap: 4px;
    padding: 0 2px;
    border-radius: 2px;
    background-color: #6699cc;
    color: #fff;
    font-size: 11px;
}
.symbol b {
    width: 13px;
    height: 13px;
    border-radius: 2px;
    background-color: #fff;
    color: #5791cc;
    line-height: 13px;
    text-align: center;
}
.dialog-footer {
    display: flex;
    justify-content: flex-end;
    gap: 5px;
    height: 54px;
    padding: 22px 10px 10px;
}
.dialog-footer button {
    width: 75px;
    height: 22px;
    border-color: #b4b4b4;
}

/* Anotaciones */
.notes {
    position: absolute;
    left: 0;
    top: 0;
    width: 100%;
    height: 100%;
    pointer-events: none;
}
.note-text {
    fill: #0000ff;
    font-size: 36px;
    stroke: #fff;
    stroke-width: 2px;
    paint-order: stroke;
}
.tab-letter {
    font-family: "Liberation Mono", monospace;
    font-size: 10px;
    font-weight: bold;
    fill: #444;
    text-anchor: middle;
}
.author {
    position: absolute;
    right: 0;
    bottom: 19px;
    padding: 0 9px 3px 12px;
    background-color: #fff;
    color: #000;
    font-size: 22px;
    line-height: 38px;
}
```
